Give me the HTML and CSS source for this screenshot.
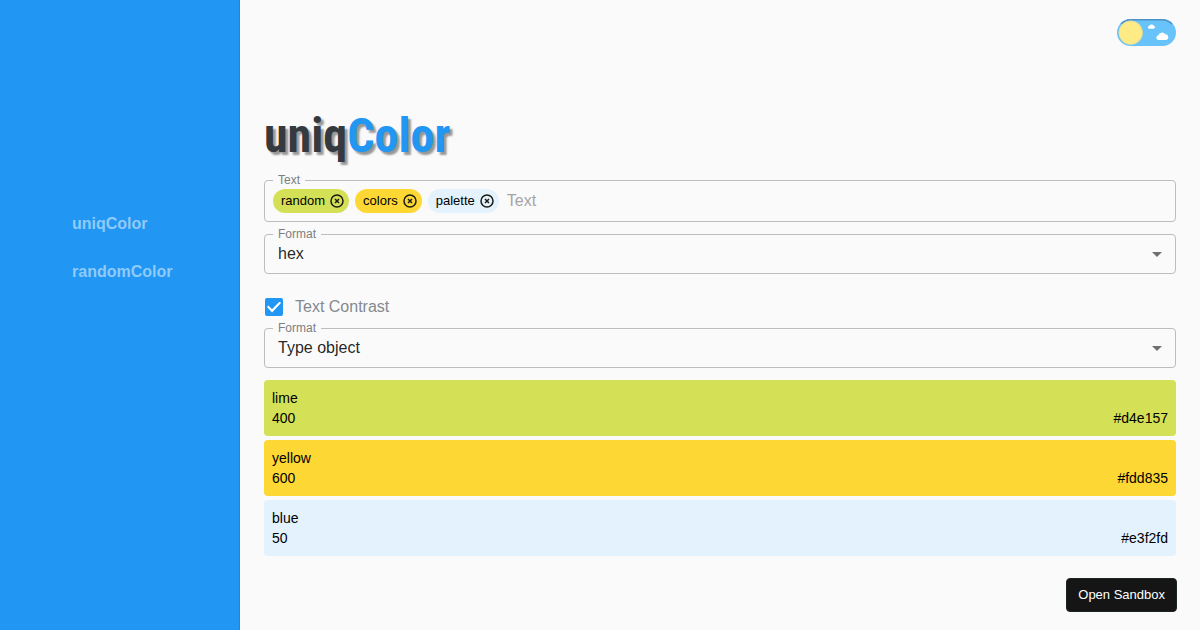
FILE: index.html
```html
<!DOCTYPE html>
<html lang="en">
<head>
<meta charset="utf-8">
<meta name="viewport" content="width=device-width, initial-scale=1">
<title>uniqColor</title>
<link rel="stylesheet" href="styles.css">
</head>
<body>
<div class="app">
  <nav class="sidebar">
    <a class="nav-link" href="#uniq">uniqColor</a>
    <a class="nav-link" href="#random">randomColor</a>
  </nav>
  <main class="content">
    <header class="topbar">
      <button class="theme-toggle" type="button" aria-label="Toggle theme">
        <svg viewBox="0 0 59 27" width="59" height="27" aria-hidden="true">
          <rect width="59" height="27" rx="13.500" fill="#68c3fb"/>
          <path d="M4 5C7 2 10 .7 14 .7H45C49 .7 52 2 55 5" fill="none" stroke="#4d91c8" stroke-width="1.400"/>
          <circle cx="13.700" cy="13.700" r="11.800" fill="#ffeb86" stroke="#dfdc9d" stroke-width=".8"/>
          <path d="M31.800 9.800a1.600 1.600 0 0 1 .5-3 2.600 2.600 0 0 1 4.300-.2 1.700 1.700 0 0 1 .4 3.200zM41 21a2.500 2.500 0 0 1 .3-4.800 4 4 0 0 1 7-.9 2.900 2.900 0 0 1 .8 5.700z" fill="#fff"/>
        </svg>
      </button>
    </header>
    <h1 class="logo">uniq<span class="logo-accent">Color</span></h1>
    <form class="form">
      <div class="field field-chips">
        <label class="field-label" for="text">Text</label>
        <span class="chip chip-lime">random
          <button class="chip-remove" type="button" aria-label="Remove random"><svg viewBox="0 0 14 14" width="14" height="14"><path d="M5 5l4 4M9 5l-4 4"/><circle cx="7" cy="7" r="6"/></svg></button>
        </span>
        <span class="chip chip-yellow">colors
          <button class="chip-remove" type="button" aria-label="Remove colors"><svg viewBox="0 0 14 14" width="14" height="14"><path d="M5 5l4 4M9 5l-4 4"/><circle cx="7" cy="7" r="6"/></svg></button>
        </span>
        <span class="chip chip-blue">palette
          <button class="chip-remove" type="button" aria-label="Remove palette"><svg viewBox="0 0 14 14" width="14" height="14"><path d="M5 5l4 4M9 5l-4 4"/><circle cx="7" cy="7" r="6"/></svg></button>
        </span>
        <input class="text-input" id="text" type="text" placeholder="Text">
      </div>
      <div class="field">
        <label class="field-label" for="format">Format</label>
        <select class="select" id="format"><option>hex</option><option>rgb</option><option>hsl</option></select>
        <svg class="arrow" viewBox="0 0 10 5" width="10" height="5" aria-hidden="true"><path d="M0 0h10L5 5z"/></svg>
      </div>
      <label class="check"><input class="check-box" type="checkbox" checked>Text Contrast</label>
      <div class="field">
        <label class="field-label" for="type">Format</label>
        <select class="select" id="type"><option>Type object</option><option>Type array</option></select>
        <svg class="arrow" viewBox="0 0 10 5" width="10" height="5" aria-hidden="true"><path d="M0 0h10L5 5z"/></svg>
      </div>
    </form>
    <ul class="swatches">
      <li class="swatch chip-lime"><span>lime<br>400</span><span>#d4e157</span></li>
      <li class="swatch chip-yellow"><span>yellow<br>600</span><span>#fdd835</span></li>
      <li class="swatch chip-blue"><span>blue<br>50</span><span>#e3f2fd</span></li>
    </ul>
  </main>
</div>
<button class="sandbox" type="button">Open Sandbox</button>
</body>
</html>
```
FILE: styles.css
```css
* { box-sizing: border-box; }
body {
  margin: 0;
  background: #fafafa;
  color: rgba(0, 0, 0, .87);
  font: 16px/24px "Liberation Sans", Arial, sans-serif;
}
button, input, select { font: inherit; color: inherit; }
.app { display: flex; min-height: 100vh; }
.sidebar {
  flex: 0 0 240px;
  display: flex;
  flex-direction: column;
  gap: 24px;
  padding: 212px 24px 24px 72px;
  background: #2196f3;
  border-right: 1px solid #1e87db;
}
.nav-link { color: #90caf9; font-weight: 700; text-decoration: none; }
.content { flex: 1; min-width: 0; padding: 19px 24px 24px; }
.topbar { display: flex; justify-content: flex-end; }
.theme-toggle { display: flex; padding: 0; border: 0; border-radius: 14px; background: none; cursor: pointer; }
.logo {
  margin: 58px 0 12px;
  color: #343a40;
  font: 700 48px/64px "Roboto Condensed", "Liberation Sans Narrow", "Liberation Sans", sans-serif;
  text-shadow: 3px 3px 2px rgba(0, 0, 0, .4);
}
.logo-accent { color: #2196f3; }
.form { display: flex; flex-direction: column; gap: 12px; }
.field {
  position: relative;
  display: flex;
  align-items: center;
  height: 40px;
  border: 1px solid #bdbdbd;
  border-radius: 4px;
}
.field-chips { height: 42px; gap: 6px; padding: 0 8px; }
.field-label {
  position: absolute;
  top: -9px;
  left: 8px;
  padding: 0 5px;
  background: #fafafa;
  color: #7b7f80;
  font-size: 12px;
  line-height: 16px;
}
.chip {
  display: flex;
  align-items: center;
  gap: 5px;
  height: 24px;
  padding: 0 5px 0 8px;
  border-radius: 12px;
  font-size: 13px;
}
.chip-lime { background: #d4e157; color: #000; }
.chip-yellow { background: #fdd835; color: #000; }
.chip-blue { background: #e3f2fd; color: #000; }
.chip-remove { display: flex; padding: 0; border: 0; background: none; cursor: pointer; }
.chip-remove svg { fill: none; stroke: #1b1b13; stroke-width: 1.5; }
.text-input { flex: 1; min-width: 0; padding: 0 2px; border: 0; outline: 0; background: none; }
.text-input::placeholder { color: #a5a5a5; }
.select {
  width: 100%;
  height: 100%;
  padding: 0 32px 0 13px;
  border: 0;
  outline: 0;
  background: none;
  appearance: none;
}
.arrow { position: absolute; right: 13px; fill: #707070; pointer-events: none; }
.check { display: flex; align-items: center; gap: 12px; margin: 9px 0 -3px 1px; color: #84898f; }
.check-box {
  width: 18px;
  height: 18px;
  margin: 0;
  border-radius: 2px;
  background: #2196f3;
  appearance: none;
  display: grid;
  place-items: center;
}
.check-box:checked::before {
  content: "";
  width: 14px;
  height: 11px;
  background: #fff;
  clip-path: polygon(0 50%, 10% 37%, 36% 70%, 90% 0, 100% 13%, 36% 100%);
}
.swatches { display: flex; flex-direction: column; gap: 4px; margin: 12px 0 0; padding: 0; list-style: none; }
.swatch {
  display: flex;
  justify-content: space-between;
  align-items: flex-end;
  padding: 8px;
  border-radius: 4px;
  font-size: 14px;
  line-height: 20px;
}
.sandbox {
  position: fixed;
  right: 23px;
  bottom: 18px;
  height: 34px;
  padding: 0 11px;
  border: 1px solid #1d2424;
  border-radius: 4px;
  background: #151515;
  color: #fff;
  font-size: 13px;
  cursor: pointer;
}
```
